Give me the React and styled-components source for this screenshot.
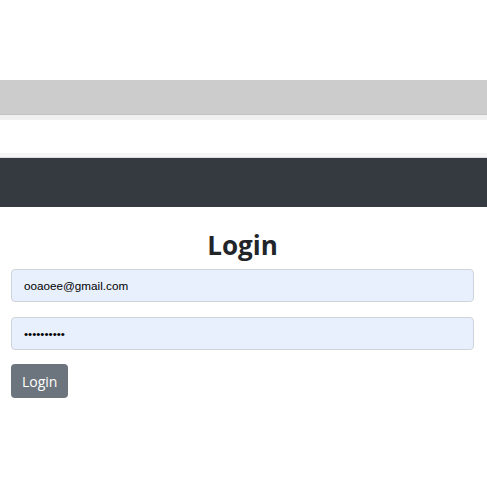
import React from 'react'
import styled, { createGlobalStyle } from 'styled-components'

const Global = createGlobalStyle`
  html, body {
    margin: 0;
    padding: 0;
    background: #fff;
    font-family: "Open Sans", "Noto Sans", sans-serif;
    color: #212529;
  }
`

const Page = styled.div`
  display: flex;
  flex-direction: column;
  padding-top: 80px;
`

const TopBand = styled.div`
  height: 34px;
  background: #cccccc;
  border-bottom: 1px solid #c2c2c2;
`

const Strip = styled.div`
  height: ${(p) => p.h}px;
  background: ${(p) => p.bg};
`

const WhiteBar = styled.div`
  height: 33px;
  background: #ffffff;
`

const DarkBar = styled.div`
  height: 49px;
  background: #343a40;
  border-top: 1px solid #dcdde0;
`

const FormBox = styled.form`
  display: flex;
  flex-direction: column;
  padding: 23px 13px 0 11px;
`

const Title = styled.h2`
  margin: 0 0 8px;
  text-align: center;
  font-size: 26px;
  line-height: 31px;
  font-weight: 700;
  color: #212529;
`

const Field = styled.input`
  box-sizing: border-box;
  height: 33px;
  margin-bottom: ${(p) => (p.last ? 14 : 15)}px;
  padding: 0 12px;
  border: 1px solid #ced4da;
  border-radius: 4px;
  background: #e8f0fe;
  color: #000;
  font-family: "Liberation Sans", Arial, sans-serif;
  font-size: 11.7px;
  outline: none;
`

const Button = styled.button`
  align-self: flex-start;
  height: 34px;
  padding: 0 11px;
  border: none;
  border-radius: 4px;
  background: #6c757d;
  color: #fff;
  font-family: "Open Sans", "Noto Sans", sans-serif;
  font-size: 14px;
  cursor: pointer;
`

export default function App() {
  return (
    <>
      <Global />
      <Page>
        <TopBand />
        <Strip h={5} bg="#f0f0f0" />
        <WhiteBar />
        <Strip h={4} bg="#f6f6f6" />
        <DarkBar />
        <FormBox onSubmit={(e) => e.preventDefault()}>
          <Title>Login</Title>
          <Field type="email" defaultValue="ooaoee@gmail.com" />
          <Field type="password" defaultValue="1234567890" last />
          <Button type="submit">Login</Button>
        </FormBox>
      </Page>
    </>
  )
}
